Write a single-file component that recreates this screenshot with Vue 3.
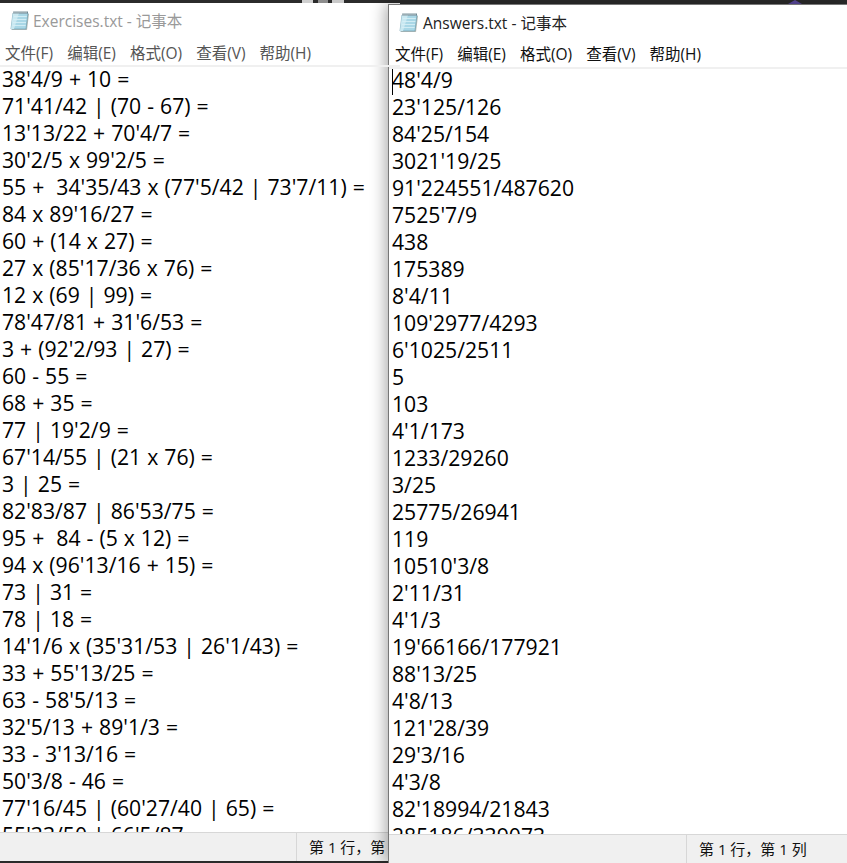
<script setup>
const menus = ['文件(F)', '编辑(E)', '格式(O)', '查看(V)', '帮助(H)']
const exercises = [
  "38'4/9 + 10 =", "71'41/42 | (70 - 67) =", "13'13/22 + 70'4/7 =", "30'2/5 x 99'2/5 =",
  "55 +  34'35/43 x (77'5/42 | 73'7/11) =", "84 x 89'16/27 =", "60 + (14 x 27) =", "27 x (85'17/36 x 76) =",
  "12 x (69 | 99) =", "78'47/81 + 31'6/53 =", "3 + (92'2/93 | 27) =", "60 - 55 =", "68 + 35 =",
  "77 | 19'2/9 =", "67'14/55 | (21 x 76) =", "3 | 25 =", "82'83/87 | 86'53/75 =", "95 +  84 - (5 x 12) =",
  "94 x (96'13/16 + 15) =", "73 | 31 =", "78 | 18 =", "14'1/6 x (35'31/53 | 26'1/43) =", "33 + 55'13/25 =",
  "63 - 58'5/13 =", "32'5/13 + 89'1/3 =", "33 - 3'13/16 =", "50'3/8 - 46 =", "77'16/45 | (60'27/40 | 65) =",
  "55'33/50 | 66'5/87"
]
const answers = [
  "48'4/9", "23'125/126", "84'25/154", "3021'19/25", "91'224551/487620", "7525'7/9", "438", "175389", "8'4/11",
  "109'2977/4293", "6'1025/2511", "5", "103", "4'1/173", "1233/29260", "3/25", "25775/26941", "119", "10510'3/8",
  "2'11/31", "4'1/3", "19'66166/177921", "88'13/25", "4'8/13", "121'28/39", "29'3/16", "4'3/8", "82'18994/21843",
  "285186/339073"
]
const windows = [
  { id: 'left', title: 'Exercises.txt - 记事本', lines: exercises, status: '第 1 行，第', caret: false },
  { id: 'right', title: 'Answers.txt - 记事本', lines: answers, status: '第 1 行，第 1 列', caret: true }
]
</script>

<template>
  <div class="desktop">
    <i class="mark m1"></i>
    <i class="mark m2"></i>
    <i class="mark m3"></i>
    <i class="mark m4"></i>
    <section v-for="w in windows" :key="w.id" class="win" :class="w.id">
      <header class="titlebar">
        <svg class="icon" width="20" height="21" viewBox="0 0 20 21">
          <path d="M4 3 H19 L17 19 H2 Z" fill="#8a8f86" opacity="0.6" transform="translate(1 1)" />
          <path d="M4 3 H19 L17 19 H2 Z" fill="#a9d7e6" stroke="#6f9fb2" stroke-width="0.7" />
          <path d="M4 3 H10 L5 19 H2 Z" fill="#c9e8f1" />
          <path d="M4.8 6.5 H17.8 M4.4 9.5 H17.4 M4 12.5 H17 M3.6 15.5 H16.6" stroke="#d6eef5" stroke-width="0.9" />
          <path d="M4.2 1.6 H19 V3.4 H4 Z" fill="#6e8791" />
          <path d="M5 1.5 V3.4 M7 1.5 V3.4 M9 1.5 V3.4 M11 1.5 V3.4 M13 1.5 V3.4 M15 1.5 V3.4 M17 1.5 V3.4" stroke="#dfe7ea" stroke-width="0.8" />
        </svg>
        <span class="title">{{ w.title }}</span>
      </header>
      <nav class="menubar">
        <span v-for="m in menus" :key="m" class="menu">{{ m }}</span>
      </nav>
      <main class="editor">
        <i v-if="w.caret" class="caret"></i>
        <div v-for="(l, i) in w.lines" :key="i" class="line">{{ l }}</div>
      </main>
      <footer class="statusbar">
        <span class="status">{{ w.status }}</span>
      </footer>
    </section>
  </div>
</template>

<style scoped>
.desktop {
  position: relative;
  width: 847px;
  height: 863px;
  overflow: hidden;
  background: #2b2b2b;
  font-family: "Open Sans", "Noto Sans CJK SC", sans-serif;
}
.mark {
  position: absolute;
  top: 0;
  height: 3px;
}
.m1 {
  left: 302px;
  width: 11px;
  background: #cfcfcf;
}
.m2 {
  left: 318px;
  width: 10px;
  background: #8d8d8d;
}
.m3 {
  left: 332px;
  width: 12px;
  background: #c9c9c9;
}
.m4 {
  left: 788px;
  width: 14px;
  height: 4px;
  background: #5c4aa0;
  clip-path: polygon(50% 0, 100% 100%, 0 100%);
}
.win {
  position: absolute;
  background: #fff;
  display: flex;
  flex-direction: column;
  overflow: hidden;
}
.left {
  left: 0;
  top: 3px;
  width: 400px;
  height: 858px;
}
.right {
  left: 388px;
  top: 4px;
  width: 459px;
  height: 859px;
  border-left: 1px solid #777;
  border-top: 1px solid #777;
  box-shadow: -3px 0 14px rgba(0, 0, 0, 0.32);
  box-sizing: border-box;
}
.titlebar {
  height: 36px;
  flex: none;
  display: flex;
  align-items: center;
  padding-left: 9px;
  padding-bottom: 2px;
  box-sizing: border-box;
  gap: 4px;
  font-size: 15.5px;
}
.right .titlebar {
  gap: 5px;
}
.left .title {
  color: #999;
}
.right .title {
  color: #222;
}
.menubar {
  position: relative;
  z-index: 1;
  height: 26px;
  flex: none;
  display: flex;
  gap: 14px;
  padding-left: 5px;
  align-items: center;
  font-size: 15.5px;
  color: #555;
  border-bottom: 2px solid #f0f0f0;
}
.right .menubar {
  color: #111;
  height: 25px;
  padding-left: 6px;
  padding-bottom: 1px;
}
.editor {
  flex: 1;
  min-height: 0;
  margin-top: -2px;
  overflow: hidden;
  position: relative;
  padding-left: 2px;
  font-size: 21.2px;
  line-height: 27px;
  word-spacing: 0.5px;
  color: #000;
}
.line {
  white-space: pre;
  height: 27px;
}
.right .editor {
  margin-top: -3px;
  padding-left: 3px;
}
.caret {
  position: absolute;
  left: 3px;
  top: 3px;
  width: 1px;
  height: 26px;
  background: #000;
}
.statusbar {
  position: relative;
  height: 28px;
  flex: none;
  background: #f0f0f0;
  border-top: 1px solid #d7d7d7;
  display: flex;
  font-size: 15px;
  color: #111;
}
.status {
  margin-left: 296px;
  padding-left: 12px;
  border-left: 1px solid #d7d7d7;
  white-space: nowrap;
  line-height: 28px;
}
.right .status {
  margin-left: 297px;
}
</style>

<style>
body { margin: 0; }
</style>
